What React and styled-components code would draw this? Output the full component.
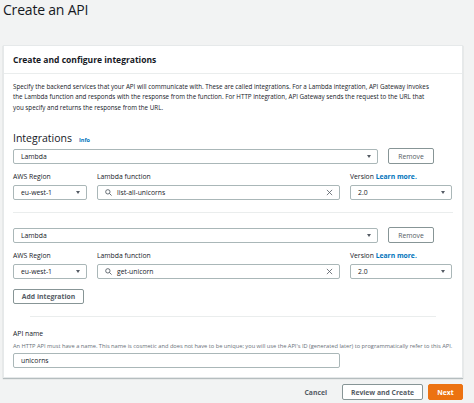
import React from "react";
import styled, { createGlobalStyle } from "styled-components";

const GlobalStyle = createGlobalStyle`
  html, body { margin: 0; padding: 0; }
  body {
    background: #f2f3f3;
    font-family: "Open Sans", "Liberation Sans", sans-serif;
    color: #16191f;
    width: 474px;
    height: 403px;
    overflow: hidden;
  }
`;

const Page = styled.div`
  display: flex;
  flex-direction: column;
  padding: 0 11px 0 3px;
`;

const Title = styled.h1`
  margin: 0;
  height: 45px;
  font-size: 14px;
  font-weight: 400;
  line-height: 19px;
  letter-spacing: -0.2px;
`;

const Panel = styled.section`
  background: #fff;
  border: 1px solid #e6e9ea;
  box-shadow: 0 1px 1px rgba(0, 28, 36, 0.25);
`;

const PanelHeader = styled.header`
  height: 27px;
  display: flex;
  align-items: center;
  padding: 0 9px;
  border-bottom: 1px solid #eaeded;
  font-size: 8.5px;
  font-weight: 700;
`;

const PanelBody = styled.div`
  padding: 8px 9px 9px;
  display: flex;
  flex-direction: column;
`;

const Description = styled.p`
  margin: 0;
  font-size: 6.25px;
  line-height: 10.4px;
  white-space: nowrap;
  color: #16191f;
`;

const SectionTitle = styled.div`
  margin-top: 18px;
  display: flex;
  align-items: baseline;
  gap: 7px;
  font-size: 10.5px;
  line-height: 14px;
`;

const Info = styled.span`
  font-size: 5.5px;
  font-weight: 700;
  color: #0073bb;
`;

const Row = styled.div`
  display: flex;
  align-items: center;
  gap: 10px;
  margin-top: ${(p) => p.$mt || 0}px;
`;

const Box = styled.div`
  box-sizing: border-box;
  height: 15px;
  border: 1px solid #aab7b8;
  border-radius: 2px;
  background: #fff;
  display: flex;
  align-items: center;
  gap: 5px;
  padding: 0 6px 0 7px;
  font-size: 6.8px;
  color: #16191f;
  width: ${(p) => p.$w}px;
  flex: none;
`;

const BoxText = styled.span`
  flex: 1;
  white-space: nowrap;
`;

const Caret = styled.span`
  width: 0;
  height: 0;
  border-left: 2.5px solid transparent;
  border-right: 2.5px solid transparent;
  border-top: 3.5px solid #545b64;
`;

const Button = styled.button`
  box-sizing: border-box;
  height: ${(p) => p.$h || 15}px;
  padding: 0;
  width: ${(p) => p.$w}px;
  border: 1px solid #879596;
  border-radius: 2px;
  background: #fff;
  color: #545b64;
  font-family: inherit;
  font-size: 6.8px;
  font-weight: ${(p) => (p.$bold ? 700 : 400)};
  flex: none;
`;

const Fields = styled.div`
  display: grid;
  grid-template-columns: 74px 243px 102px;
  column-gap: 10px;
  margin-top: 8px;
`;

const Label = styled.label`
  font-size: 6.8px;
  line-height: 9px;
  margin-bottom: 4px;
  color: #16191f;
  white-space: nowrap;
`;

const Link = styled.span`
  color: #0073bb;
  font-weight: 700;
`;

const Divider = styled.hr`
  border: 0;
  border-top: 1px solid #eaeded;
  margin: ${(p) => p.$m};
`;

const Helper = styled.div`
  font-size: 5.7px;
  line-height: 8px;
  color: #687078;
  margin: 0 0 3px;
  white-space: nowrap;
`;

const Footer = styled.footer`
  display: flex;
  justify-content: flex-end;
  align-items: center;
  gap: 5px;
  margin-top: 6px;
`;

const Cancel = styled.button`
  border: 0;
  background: none;
  font-family: inherit;
  font-size: 6.8px;
  font-weight: 700;
  color: #545b64;
  padding: 0;
  margin-right: 10px;
`;

const Primary = styled(Button)`
  background: #ec7211;
  border-color: #ec7211;
  color: #fff;
`;

function SearchIcon() {
  return (
    <svg width="7" height="7" viewBox="0 0 16 16" fill="none" stroke="#545b64" strokeWidth="2">
      <circle cx="6.5" cy="6.5" r="5" />
      <path d="M10.2 10.2L15 15" />
    </svg>
  );
}

function ClearIcon() {
  return (
    <svg width="7" height="7" viewBox="0 0 16 16" fill="none" stroke="#545b64" strokeWidth="1.8">
      <path d="M2 2l12 12M14 2L2 14" />
    </svg>
  );
}

function Integration({ fn }) {
  return (
    <>
      <Row>
        <Box $w={365}>
          <BoxText>Lambda</BoxText>
          <Caret />
        </Box>
        <Button $w={46} $h={16}>Remove</Button>
      </Row>
      <Fields>
        <Label>AWS Region</Label>
        <Label>Lambda function</Label>
        <Label>
          Version <Link>Learn more.</Link>
        </Label>
        <Box $w={74}>
          <BoxText>eu-west-1</BoxText>
          <Caret />
        </Box>
        <Box $w={243}>
          <SearchIcon />
          <BoxText>{fn}</BoxText>
          <ClearIcon />
        </Box>
        <Box $w={102}>
          <BoxText>2.0</BoxText>
          <Caret />
        </Box>
      </Fields>
    </>
  );
}

export default function App() {
  return (
    <>
      <GlobalStyle />
      <Page>
        <Title>Create an API</Title>
        <Panel>
          <PanelHeader>Create and configure integrations</PanelHeader>
          <PanelBody>
            <Description>
              Specify the backend services that your API will communicate with. These are called integrations. For a
              Lambda integration, API Gateway invokes
              <br />
              the Lambda function and responds with the response from the function. For HTTP integration, API Gateway
              sends the request to the URL that
              <br />
              you specify and returns the response from the URL.
            </Description>
            <SectionTitle>
              Integrations <Info>Info</Info>
            </SectionTitle>
            <Row $mt={1} />
            <Integration fn="list-all-unicorns" />
            <Divider $m="12px 0 14px" />
            <Integration fn="get-unicorn" />
            <Row $mt={10}>
              <Button $w={71} $bold>Add integration</Button>
            </Row>
            <Divider $m="12px 17px 12px" />
            <Label>API name</Label>
            <Helper>
              An HTTP API must have a name. This name is cosmetic and does not have to be unique; you will use the API's
              ID (generated later) to programmatically refer to this API.
            </Helper>
            <Box $w={327}>
              <BoxText>unicorns</BoxText>
            </Box>
          </PanelBody>
        </Panel>
        <Footer>
          <Cancel>Cancel</Cancel>
          <Button $w={81} $h={16} $bold>Review and Create</Button>
          <Primary $w={35} $h={16} $bold>Next</Primary>
        </Footer>
      </Page>
    </>
  );
}
